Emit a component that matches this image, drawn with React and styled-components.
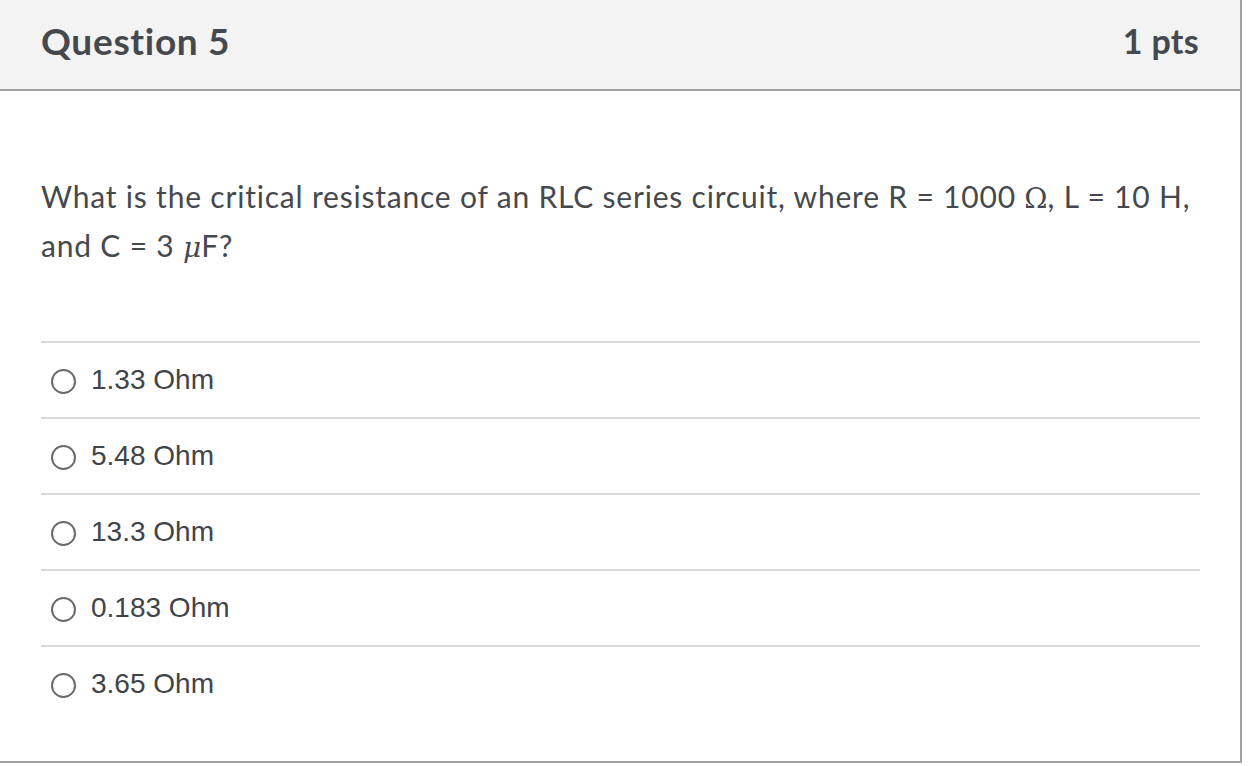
import styled, { createGlobalStyle } from "styled-components"

const Global = createGlobalStyle`
    body {
        margin: 0;
        background: #ffffff;
        font-family: Lato, "Open Sans", sans-serif;
        color: #45494e;
    }
`

const Card = styled.div`
    width: 1240px;
    border-right: 2px solid #a0a0a0;
    border-bottom: 2px solid #a0a0a0;
    box-sizing: content-box;
    padding-bottom: 40px;
`

const Header = styled.div`
    height: 89px;
    background: #f3f3f3;
    border-bottom: 2px solid #a0a0a0;
    display: flex;
    align-items: center;
    justify-content: space-between;
    padding: 0 41px;
    box-sizing: content-box;
`

const Title = styled.h2`
    margin: 0;
    font-size: 37px;
    font-weight: 700;
    letter-spacing: 0.7px;
    line-height: 1;
    color: #45494d;
    padding-bottom: 8px;
`

const Points = styled(Title)`
    font-size: 34px;
    letter-spacing: 0.3px;
`

const Body = styled.div`
    padding: 82px 40px 0 41px;
`

const Prompt = styled.p`
    margin: 0 0 70px;
    font-size: 30px;
    letter-spacing: 0.8px;
    line-height: 46px;
`

const Math = styled.span`
    font-family: "DejaVu Serif", "Liberation Serif", serif;
    font-style: ${p => (p.italic ? "italic" : "normal")};
    font-size: 28px;
    letter-spacing: 0;
`

const Option = styled.label`
    display: flex;
    align-items: center;
    gap: 15px;
    height: 74px;
    border-top: 2px solid #d9d9d9;
    padding-left: 10px;
    font-family: "Liberation Sans", Arial, sans-serif;
    font-size: 28px;
    color: #404448;
`

const Radio = styled.span`
    width: 21px;
    height: 21px;
    border: 2px solid #6a6a6a;
    border-radius: 50%;
    flex: none;
    margin-top: 2px;
`

const answers = ["1.33 Ohm", "5.48 Ohm", "13.3 Ohm", "0.183 Ohm", "3.65 Ohm"]

export default function App() {
    return (
        <>
            <Global />
            <Card>
                <Header>
                    <Title>Question 5</Title>
                    <Points>1 pts</Points>
                </Header>
                <Body>
                    <Prompt>
                        What is the critical resistance of an RLC series circuit, where R = 1000 <Math>Ω</Math>, L = 10 H,
                        and C = 3 <Math italic>μ</Math>F?
                    </Prompt>
                    {answers.map(a => (
                        <Option key={a}>
                            <Radio />
                            {a}
                        </Option>
                    ))}
                </Body>
            </Card>
        </>
    )
}
